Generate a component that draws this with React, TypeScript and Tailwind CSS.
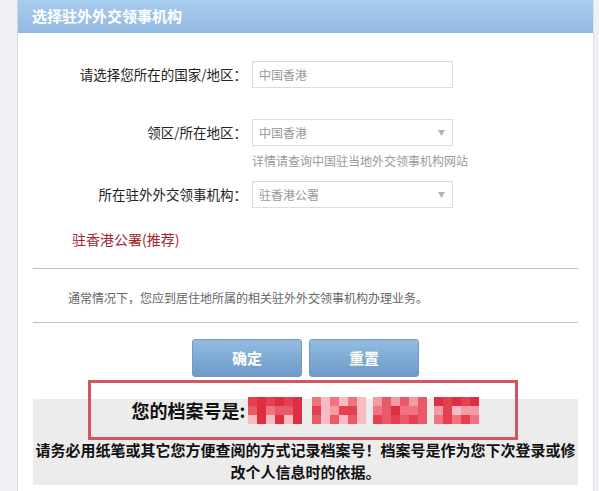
import React from 'react';

const FONT = { fontFamily: '"Noto Sans CJK SC", "Liberation Sans", sans-serif' };

// pixelated (mosaic) archive number
const GROUPS = [
  { x: 0, w: 6 },
  { x: 64, w: 6 },
  { x: 125, w: 6 },
  { x: 186, w: 5 },
];
const SHADES = ['#e5404f', '#f07480', '#f39aa3', '#dc2f42', '#f7bcc2', '#e95a68'];

function Mosaic() {
  const cells: React.ReactElement[] = [];
  GROUPS.forEach((g, gi) => {
    for (let c = 0; c < g.w; c++) {
      for (let r = 0; r < 3; r++) {
        const idx = (gi * 7 + c * 3 + r * 5 + ((c * r) % 4)) % SHADES.length;
        cells.push(
          <rect
            key={`${gi}-${c}-${r}`}
            x={g.x + c * 9}
            y={r * 9}
            width={9}
            height={9}
            fill={SHADES[idx]}
          />,
        );
      }
    }
  });
  return (
    <svg width="231" height="27" viewBox="0 0 231 27" className="block">
      {cells}
    </svg>
  );
}

function Arrow() {
  return (
    <svg width="7" height="6" viewBox="0 0 7 6" className="mr-[7px]">
      <path d="M0 0h7L3.5 6z" fill="#b5b5b5" />
    </svg>
  );
}

function Field({ label, value, select }: { label: string; value: string; select?: boolean }) {
  return (
    <div className="flex items-center">
      <div className="w-[229px] text-right text-[13.5px] text-[#222]">{label}</div>
      <div className="ml-[5px] flex h-[27px] w-[201px] items-center justify-between border border-[#dcdcdc] bg-white pl-[6px] text-[12px] text-[#999]">
        <span>{value}</span>
        {select && <Arrow />}
      </div>
    </div>
  );
}

export default function App() {
  return (
    <div className="flex min-h-[491px] w-[599px] overflow-hidden bg-[#eef0f4]" style={FONT}>
      <div className="w-[18px] shrink-0 border-r border-[#d6dae0]" />
      <div className="w-[576px] shrink-0 border-r border-[#dfe2e6] bg-white">
        <div className="h-[33px] bg-gradient-to-b from-[#a8ccef] to-[#93b9e1] pl-[14px] text-[15px] font-bold leading-[31px] text-white">
          选择驻外外交领事机构
        </div>

        <div className="pt-[28px]">
          <Field label="请选择您所在的国家/地区：" value="中国香港" />
          <div className="mt-[31px]">
            <Field label="领区/所在地区：" value="中国香港" select />
          </div>
          <div className="ml-[234px] mt-[8px] text-[12px] leading-[14px] text-[#9a9a9a]">
            详情请查询中国驻当地外交领事机构网站
          </div>
          <div className="mt-[13px]">
            <Field label="所在驻外外交领事机构：" value="驻香港公署" select />
          </div>
          <div className="ml-[54px] mt-[22px] text-[14px] leading-[18px] text-[#a3242f]">驻香港公署(推荐)</div>
        </div>

        <div className="mx-[15px] mt-[20px] border-t border-[#b7c2ca]" />
        <div className="pl-[50px] pt-[22px] text-[12px] leading-[14px] text-[#666]">
          通常情况下，您应到居住地所属的相关驻外外交领事机构办理业务。
        </div>
        <div className="mx-[15px] mt-[17px] border-t border-[#b7c2ca]" />

        <div className="mt-[16px] flex justify-center gap-[7px]">
          <button className="h-[38px] w-[110px] rounded-[3px] border border-[#6f9ac2] bg-gradient-to-b from-[#93bde0] to-[#6d9bc7] text-[15px] font-bold text-white">
            确定
          </button>
          <button className="h-[38px] w-[110px] rounded-[3px] border border-[#6f9ac2] bg-gradient-to-b from-[#93bde0] to-[#6d9bc7] text-[15px] font-bold text-white">
            重置
          </button>
        </div>

        <div className="relative mx-[15px] mt-[22px] bg-[#ececec] pb-[2px]">
          <div className="flex h-[22px] items-center justify-center gap-[3px]">
            <span className="text-[18px] font-bold text-[#111]">您的档案号是:</span>
            <Mosaic />
          </div>
          <div className="mt-[18px] text-center text-[15px] font-bold leading-[22px] text-[#111]">
            请务必用纸笔或其它您方便查阅的方式记录档案号！档案号是作为您下次登录或修
            <br />
            改个人信息时的依据。
          </div>
          {/* annotation frame */}
          <div className="pointer-events-none absolute left-[55px] top-[-19px] h-[60px] w-[430px] border-[3px] border-[#d4545f]" />
        </div>
      </div>
    </div>
  );
}
